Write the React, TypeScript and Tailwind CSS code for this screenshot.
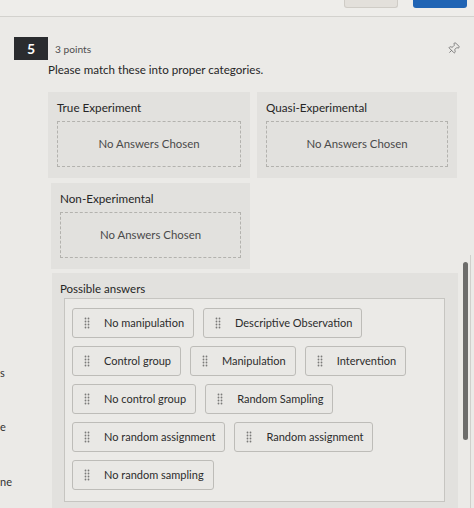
import React from 'react';
import { Pin } from 'lucide-react';

const rows: string[][] = [
  ['No manipulation', 'Descriptive Observation'],
  ['Control group', 'Manipulation', 'Intervention'],
  ['No control group', 'Random Sampling'],
  ['No random assignment', 'Random assignment'],
  ['No random sampling'],
];

const Handle = () => (
  <svg width="6" height="12" viewBox="0 0 6 12" className="shrink-0">
    {[1.5, 4.5].map((x) =>
      [1.5, 4.5, 7.5, 10.5].map((y) => (
        <circle key={`${x}-${y}`} cx={x} cy={y} r="0.9" fill="#7a7a78" />
      ))
    )}
  </svg>
);

const Chip = ({ label }: { label: string }) => (
  <div className="flex h-[30px] items-center gap-[14px] rounded-[3px] border border-[#bdbcb8] bg-[#e9e8e5] pl-[11px] pr-[9px] text-[11px] text-[#2c2c2c]">
    <Handle />
    <span className="whitespace-nowrap">{label}</span>
  </div>
);

const Category = ({ title, className = '' }: { title: string; className?: string }) => (
  <div className={`h-[86px] bg-[#e2e1de] px-[9px] pt-[7px] ${className}`}>
    <div className="text-[11.7px] leading-[16px] text-[#262626]">{title}</div>
    <div className="mt-[6px] flex h-[46px] items-center justify-center border border-dashed border-[#b3b2ae] text-[11.4px] text-[#4a4a4a]">
      No Answers Chosen
    </div>
  </div>
);

export default function App() {
  return (
    <div className="relative h-[508px] w-[474px] overflow-hidden bg-[#ebeae7] font-['Lato',sans-serif]">
      {/* top bar */}
      <div className="flex h-[17px] justify-end gap-[15px] border-b border-[#d3d2ce] bg-[#eeedea] pr-[7px]">
        <div className="h-[8px] w-[54px] rounded-b-[3px] border border-t-0 border-[#cfccc6] bg-[#e3e0db]" />
        <div className="h-[8px] w-[54px] rounded-b-[3px] bg-[#2064b4]" />
      </div>

      {/* question header */}
      <div className="mt-[20px] flex items-center pl-[14px] pr-[14px]">
        <div className="flex h-[23px] w-[34px] items-center justify-center bg-[#2a2c2f] text-[14px] font-bold text-white">
          5
        </div>
        <div className="ml-[7px] mt-[2px] text-[10.2px] text-[#4f4f4f]">3 points</div>
        <Pin size={13} className="ml-auto rotate-45 text-[#777]" strokeWidth={1.6} />
      </div>

      <div className="flex">
        {/* left gutter with clipped text */}
        <div className="w-[48px] shrink-0 text-[11px] text-[#333]">
          <div className="mt-[307px] leading-[12px]">s</div>
          <div className="mt-[42px] leading-[12px]">e</div>
          <div className="mt-[43px] leading-[12px]">ne</div>
        </div>

        <div className="w-[410px]">
          <div className="mt-[2px] text-[11.6px] leading-[16px] text-[#262626]">
            Please match these into proper categories.
          </div>

          <div className="mt-[14px] grid grid-cols-[202px_200px] gap-x-[7px] gap-y-[5px]">
            <Category title="True Experiment" />
            <Category title="Quasi-Experimental" />
            <Category title="Non-Experimental" className="ml-[3px]" />
          </div>

          <div className="ml-[4px] mt-[4px] bg-[#e2e1de] pb-[6px] pl-[12px] pr-[8px] pt-[8px]">
            <div className="-ml-[4px] text-[11.5px] leading-[16px] text-[#262626]">Possible answers</div>
            <div className="mt-[1px] flex h-[204px] w-[381px] flex-col gap-[8px] border border-[#c6c5c1] bg-[#ebeae7] pl-[7px] pt-[9px]">
              {rows.map((r, i) => (
                <div key={i} className="flex gap-[9px]">
                  {r.map((l) => (
                    <Chip key={l} label={l} />
                  ))}
                </div>
              ))}
            </div>
          </div>
        </div>
      </div>

      {/* scrollbar */}
      <div className="absolute left-[470px] top-[255px] h-[253px] w-px bg-[#d0cfcb]" />
      <div className="absolute left-[463px] top-[262px] h-[178px] w-[5px] rounded-full bg-[#6d6d6b]" />
    </div>
  );
}
